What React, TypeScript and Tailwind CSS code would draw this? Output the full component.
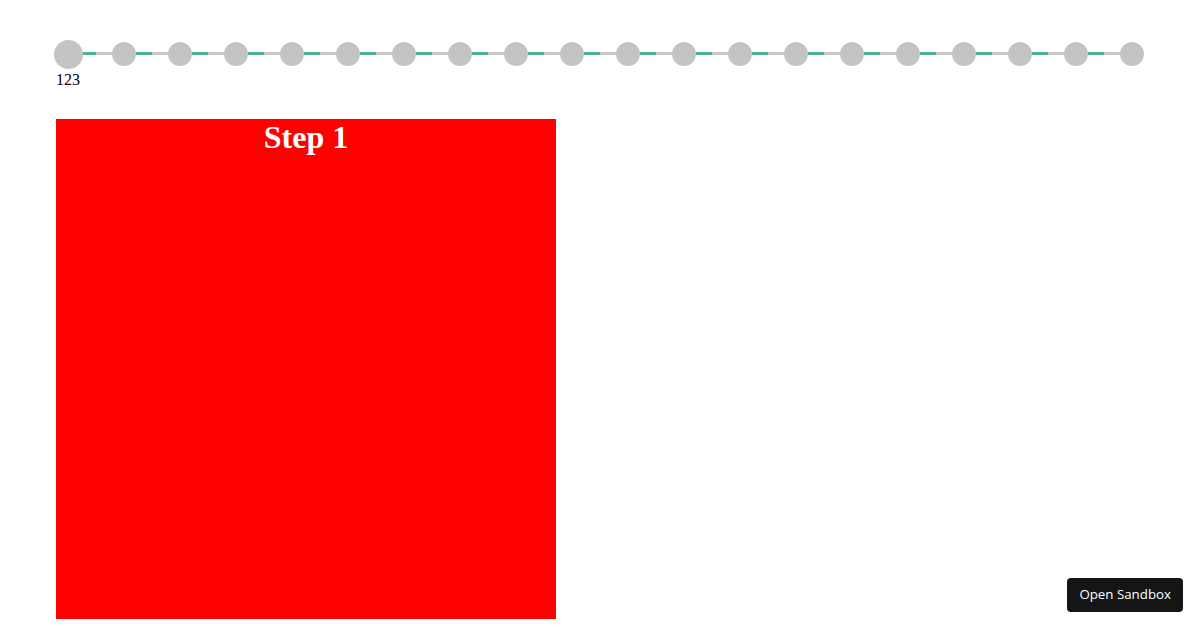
import React from "react";

const STEPS = Array.from({ length: 20 }, (_, i) => i);

export default function App() {
  return (
    <div className="relative min-h-[630px] bg-white px-[56px] pt-[40px] font-['Liberation_Serif',serif] text-black">
      {/* Stepper */}
      <div className="flex h-[28px] items-center">
        {STEPS.map((i) => (
          <React.Fragment key={i}>
            <div className="relative flex w-[24px] shrink-0 justify-center">
              {i === 0 ? (
                <div className="-mx-[3px] h-[29px] w-[29px] shrink-0 rounded-full bg-[#c4c4c4]" />
              ) : (
                <div className="h-[24px] w-[24px] rounded-full bg-[#c4c4c4]" />
              )}
              {i === 0 && (
                <span className="absolute left-1/2 top-[31px] -translate-x-1/2 font-['Liberation_Serif',serif] text-[16px] leading-[18px]">
                  123
                </span>
              )}
            </div>
            {i < STEPS.length - 1 && (
              <div className="mb-[2px] flex h-[3px] flex-1">
                <div className="h-full flex-1 bg-[#4fb38f]" />
                <div className="h-full w-[16px] bg-[#c8c8c8]" />
              </div>
            )}
          </React.Fragment>
        ))}
      </div>

      {/* Content */}
      <div className="mt-[51px] h-[500px] w-[500px] bg-[#ff0000]">
        <h1 className="text-center text-[32px] font-bold leading-[37px] text-white">Step 1</h1>
      </div>

      <button className="absolute bottom-[18px] right-[17px] h-[34px] rounded-[4px] bg-[#151515] px-[12px] font-['Open_Sans',sans-serif] text-[13.3px] text-white">
        Open Sandbox
      </button>
    </div>
  );
}
